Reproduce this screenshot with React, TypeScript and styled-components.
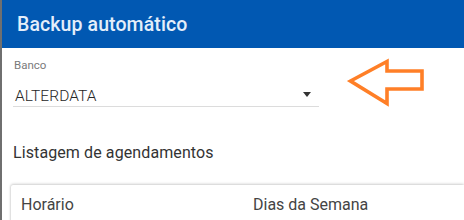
import React from "react";
import styled, { createGlobalStyle } from "styled-components";

const GlobalStyle = createGlobalStyle`
  html, body {
    margin: 0;
    padding: 0;
    height: 100%;
    background: linear-gradient(to right, #6f6f6f, #9a9a9a);
    overflow: hidden;
  }
  body {
    font-family: Roboto, "Noto Sans", Arial, sans-serif;
  }
`;

const Dialog = styled.div`
  margin-left: 2px;
  width: 462px;
  height: 220px;
  background: #fff;
  overflow: hidden;
`;

const Header = styled.div`
  height: 48px;
  background: #0158b2;
  display: flex;
  align-items: center;
  padding-left: 15px;
  color: #e4eefa;
  font-size: 19.5px;
  font-weight: 500;
  letter-spacing: 0.1px;
`;

const Body = styled.div`
  padding: 10px 0 0 11px;
`;

const FieldRow = styled.div`
  display: flex;
  align-items: flex-start;
`;

const SelectField = styled.div`
  width: 306px;
  display: flex;
  flex-direction: column;
`;

const Label = styled.span`
  font-size: 11.5px;
  color: #7a7a7a;
  padding-left: 1px;
  line-height: 14px;
`;

const SelectBox = styled.div`
  height: 35px;
  display: flex;
  align-items: center;
  justify-content: space-between;
  border-bottom: 1px solid #dcdcdc;
  padding: 14px 8px 0 2px;
  box-sizing: border-box;
`;

const Value = styled.span`
  font-size: 15.5px;
  font-weight: 300;
  color: #262626;
  letter-spacing: 0.1px;
`;

const Caret = styled.span`
  width: 0;
  height: 0;
  border-left: 4.5px solid transparent;
  border-right: 4.5px solid transparent;
  border-top: 5px solid #333;
  margin-top: -4px;
`;

const Pointer = styled.svg`
  margin-left: 26px;
  margin-top: -1px;
`;

const SectionTitle = styled.h3`
  margin: 36px 0 0 0;
  font-size: 16px;
  font-weight: 400;
  color: #333;
  letter-spacing: 0.1px;
`;

const Card = styled.div`
  margin: 23px 0 0 -2px;
  background: #fff;
  box-shadow: 0 -1px 3px rgba(0, 0, 0, 0.18), -1px 0 2px rgba(0, 0, 0, 0.08);
  border-radius: 2px 0 0 0;
  height: 60px;
`;

const HeadRow = styled.div`
  display: grid;
  grid-template-columns: 232px 1fr;
  height: 38px;
  align-items: center;
`;

const HeadCell = styled.div`
  padding-left: 10px;
  font-size: 16px;
  color: #444;
  font-weight: 400;
`;

export default function App() {
  return (
    <>
      <GlobalStyle />
      <Dialog>
        <Header>Backup automático</Header>
        <Body>
          <FieldRow>
            <SelectField>
              <Label>Banco</Label>
              <SelectBox>
                <Value>ALTERDATA</Value>
                <Caret />
              </SelectBox>
            </SelectField>
            <Pointer width="80" height="50" viewBox="345 57 80 50">
              <polygon
                points="350.5,81 387,61.5 387,71 422,71 422,89 387,89 387,103.5"
                fill="none"
                stroke="#ff7f27"
                strokeWidth="3.6"
                strokeLinejoin="miter"
              />
            </Pointer>
          </FieldRow>
          <SectionTitle>Listagem de agendamentos</SectionTitle>
          <Card>
            <HeadRow>
              <HeadCell>Horário</HeadCell>
              <HeadCell>Dias da Semana</HeadCell>
            </HeadRow>
          </Card>
        </Body>
      </Dialog>
    </>
  );
}
